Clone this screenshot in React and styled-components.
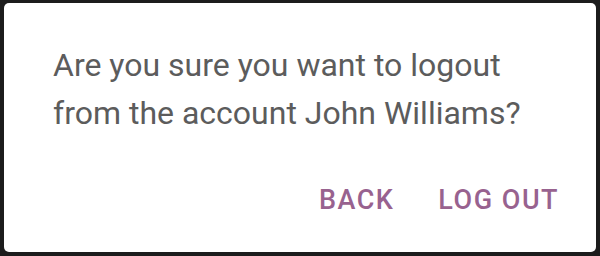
import React from "react";
import styled, {createGlobalStyle} from "styled-components";

const GlobalStyle = createGlobalStyle`
  html, body {
    margin: 0;
    padding: 0;
    background: #1c1c1c;
  }
  body {
    font-family: Roboto, "Liberation Sans", sans-serif;
  }
`;

const App = () => {
    return (
        <>
            <GlobalStyle />
            <Page>
                <Dialog>
                    <Message>
                        Are you sure you want to logout
                        <br />
                        from the account John Williams?
                    </Message>
                    <Actions>
                        <ActionButton>Back</ActionButton>
                        <ActionButton>Log out</ActionButton>
                    </Actions>
                </Dialog>
            </Page>
        </>
    );
};

export default App;

const Page = styled.div`
  width: 600px;
  height: 256px;
  padding: 3px 4px 4px 4px;
  box-sizing: border-box;
  display: flex;
`;

const Dialog = styled.div`
  flex: 1;
  background-color: #fff;
  border-radius: 5px;
  display: flex;
  flex-direction: column;
  justify-content: space-between;
  padding: 38px 37px 36px 49px;
  box-sizing: border-box;
`;

const Message = styled.p`
  margin: 0;
  font-size: 32px;
  line-height: 48px;
  color: #5c5c5c;
`;

const Actions = styled.div`
  display: flex;
  justify-content: flex-end;
  gap: 44px;
`;

const ActionButton = styled.button`
  border: none;
  background: none;
  padding: 0;
  font-family: Roboto, "Liberation Sans", sans-serif;
  font-weight: 500;
  font-size: 27px;
  line-height: 32px;
  letter-spacing: 1.5px;
  text-transform: uppercase;
  color: #98628f;
  cursor: pointer;
`;
